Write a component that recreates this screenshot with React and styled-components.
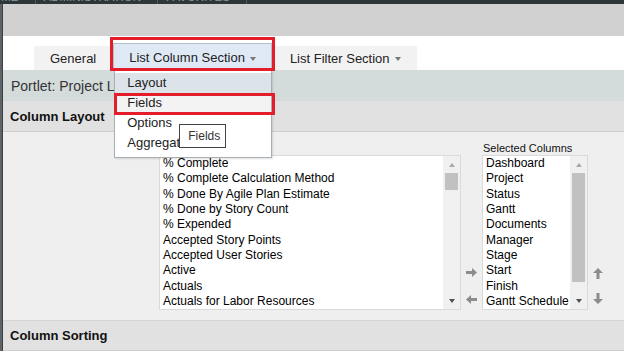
import React from 'react';
import styled, { createGlobalStyle } from 'styled-components';

const GlobalStyle = createGlobalStyle`
  html, body {
    margin: 0;
    padding: 0;
  }
  body {
    background: #5d6366;
    font-family: "Liberation Sans", Arial, sans-serif;
    overflow: hidden;
  }
  * {
    box-sizing: border-box;
  }
`;

const availableFields = [
  '% Complete',
  '% Complete Calculation Method',
  '% Done By Agile Plan Estimate',
  '% Done by Story Count',
  '% Expended',
  'Accepted Story Points',
  'Accepted User Stories',
  'Active',
  'Actuals',
  'Actuals for Labor Resources',
];

const selectedFields = [
  'Dashboard',
  'Project',
  'Status',
  'Gantt',
  'Documents',
  'Manager',
  'Stage',
  'Start',
  'Finish',
  'Gantt Schedule',
];

const Page = styled.div`
  width: 624px;
  height: 351px;
  overflow: hidden;
  background: #5d6366;
`;

const TopNav = styled.div`
  height: 4px;
  overflow: hidden;
  background: #2d3639;
  display: flex;
  margin-left: -24px;
`;

const NavItem = styled.div`
  margin-top: -10px;
  height: 14px;
  line-height: 14px;
  font-size: 11.5px;
  color: #8f9699;
  padding: 0 16px 0 8px;
  border-right: 1px solid #4f585b;
  white-space: nowrap;
`;

const Modal = styled.div`
  margin-left: 2px;
  height: 347px;
  border-left: 1px solid #3b4043;
  background: #efefef;
  display: flex;
  flex-direction: column;
`;

const ModalHeader = styled.div`
  height: 32px;
  background: #d1d1d1;
`;

const TabBar = styled.div`
  height: 34px;
  background: #fff;
  display: flex;
  align-items: flex-end;
  gap: 1px;
  padding-left: 31px;
  position: relative;
  z-index: 2;
`;

const Tab = styled.div`
  height: ${(p) => (p.$active ? '27px' : '24px')};
  padding: ${(p) => (p.$active ? '1px 15px 0 15px' : '0 16px 0 16px')};
  background: ${(p) => (p.$active ? '#dfe9f5' : '#f2f2f2')};
  border: ${(p) => (p.$active ? '1px solid #b5bfc8' : 'none')};
  border-bottom: none;
  display: flex;
  align-items: center;
  gap: 5px;
  font-size: 13px;
  color: #222;
  white-space: nowrap;
`;

const Caret = styled.span`
  width: 0;
  height: 0;
  margin-top: 2px;
  border-left: 3.5px solid transparent;
  border-right: 3.5px solid transparent;
  border-top: 4px solid #777;
`;

const MenuAnchor = styled.div`
  position: relative;
  margin-right: 1px;
`;

const Highlight = styled.span`
  position: absolute;
  top: ${(p) => p.$t}px;
  right: ${(p) => p.$r}px;
  bottom: ${(p) => p.$b}px;
  left: ${(p) => p.$l}px;
  border: 3px solid #e31e2a;
  pointer-events: none;
  z-index: 3;
`;

const Menu = styled.div`
  position: absolute;
  top: 100%;
  left: 1px;
  width: 158px;
  padding: 2px 0 4px;
  background: #fff;
  border: 1px solid #a7aeb4;
  box-shadow: 1px 1px 2px rgba(0, 0, 0, 0.12);
`;

const MenuItem = styled.div`
  position: relative;
  height: 20px;
  line-height: 20px;
  padding-left: 12px;
  font-size: 13px;
  color: #222;
  background: ${(p) =>
    p.$tone === 'current' ? '#dce4ea' : p.$tone === 'hover' ? '#f3f3f3' : '#fff'};
`;

const Tooltip = styled.div`
  position: absolute;
  left: 64px;
  top: 53px;
  width: 47px;
  height: 24px;
  padding-left: 8px;
  line-height: 22px;
  font-size: 12px;
  color: #333;
  background: #fff;
  border: 1px solid #444;
`;

const PortletBar = styled.div`
  height: 31px;
  padding-left: 8px;
  display: flex;
  align-items: center;
  background: #d3dbdb;
  font-size: 14px;
  color: #333;
`;

const SectionBar = styled.div`
  height: 31px;
  padding-left: 7px;
  display: flex;
  align-items: center;
  background: #e1e1e1;
  border-top: ${(p) => (p.$topLine ? '1px solid #d4d4d4' : 'none')};
  border-bottom: 1px solid #cfcfcf;
  font-size: 13px;
  font-weight: bold;
  color: #111;
`;

const LayoutBody = styled.div`
  height: 188px;
  display: flex;
  align-items: flex-end;
  padding: 0 0 10px 156px;
  background: #efefef;
`;

const ListBox = styled.div`
  width: ${(p) => p.$w}px;
  height: 155px;
  display: flex;
  background: #fff;
  border: 1px solid #dadada;
`;

const Options = styled.div`
  flex: 1;
  overflow: hidden;
  padding-left: ${(p) => p.$pad}px;
  font-size: 12px;
  line-height: 15.33px;
  color: #000;
  white-space: nowrap;
`;

const ScrollBar = styled.div`
  width: 17px;
  display: flex;
  flex-direction: column;
  background: #f0f0f0;
`;

const ScrollBtn = styled.div`
  height: 17px;
  display: flex;
  align-items: center;
  justify-content: center;
  &::before {
    content: '';
    width: 0;
    height: 0;
    border-left: 3.5px solid transparent;
    border-right: 3.5px solid transparent;
    ${(p) =>
      p.$down
        ? 'border-top: 4px solid #505050;'
        : 'border-bottom: 4px solid #a8a8a8;'}
  }
`;

const Track = styled.div`
  flex: 1;
`;

const Thumb = styled.div`
  height: ${(p) => p.$h}px;
  margin: 0 2px;
  background: #c1c1c1;
`;

const ArrowCol = styled.div`
  width: ${(p) => p.$w}px;
  height: 155px;
  display: flex;
  flex-direction: column;
  align-items: ${(p) => (p.$start ? 'flex-start' : 'center')};
  justify-content: flex-end;
  gap: ${(p) => p.$gap}px;
  padding: 0 0 6px ${(p) => (p.$start ? 5 : 0)}px;
`;

const SelectedCol = styled.div`
  display: flex;
  flex-direction: column;
`;

const Label = styled.div`
  font-size: 11px;
  line-height: 13px;
  padding-left: 1px;
  color: #111;
`;

const Arrow = ({ dir }) => {
  const paths = {
    right: 'M0 3H6V0L11 4.5L6 9V6H0Z',
    left: 'M11 3H5V0L0 4.5L5 9V6H11Z',
    up: 'M3.5 11V5H0L5 0L10 5H6.5V11Z',
    down: 'M3.5 0V6H0L5 11L10 6H6.5V0Z',
  };
  const horiz = dir === 'right' || dir === 'left';
  return (
    <svg width={horiz ? 11 : 10} height={horiz ? 9 : 11} viewBox={horiz ? '0 0 11 9' : '0 0 10 11'}>
      <path d={paths[dir]} fill="#8c8c8c" />
    </svg>
  );
};

const List = ({ items, width, pad, thumb }) => (
  <ListBox $w={width}>
    <Options $pad={pad}>
      {items.map((item) => (
        <div key={item}>{item}</div>
      ))}
    </Options>
    <ScrollBar>
      <ScrollBtn />
      <Track>
        <Thumb $h={thumb} />
      </Track>
      <ScrollBtn $down />
    </ScrollBar>
  </ListBox>
);

export default function App() {
  return (
    <Page>
      <GlobalStyle />
      <TopNav>
        <NavItem>HOME</NavItem>
        <NavItem>ADMINISTRATION</NavItem>
        <NavItem>FAVORITES</NavItem>
      </TopNav>
      <Modal>
        <ModalHeader />
        <TabBar>
          <Tab>General</Tab>
          <MenuAnchor>
            <Tab $active>
              List Column Section <Caret />
            </Tab>
            <Highlight $t={-6} $r={-3} $b={-1} $l={-3} />
            <Menu>
              <MenuItem $tone="current">Layout</MenuItem>
              <MenuItem $tone="hover">
                Fields
                <Highlight $t={0} $r={-4} $b={-2} $l={-1} />
              </MenuItem>
              <MenuItem>Options</MenuItem>
              <MenuItem>Aggregation</MenuItem>
              <Tooltip>Fields</Tooltip>
            </Menu>
          </MenuAnchor>
          <Tab>
            List Filter Section <Caret />
          </Tab>
        </TabBar>
        <PortletBar>Portlet: Project List</PortletBar>
        <SectionBar>Column Layout</SectionBar>
        <LayoutBody>
          <List items={availableFields} width={302} pad={3} thumb={17} />
          <ArrowCol $w={21} $gap={18}>
            <Arrow dir="right" />
            <Arrow dir="left" />
          </ArrowCol>
          <SelectedCol>
            <Label>Selected Columns</Label>
            <List items={selectedFields} width={106} pad={3} thumb={109} />
          </SelectedCol>
          <ArrowCol $w={20} $gap={14} $start>
            <Arrow dir="up" />
            <Arrow dir="down" />
          </ArrowCol>
        </LayoutBody>
        <SectionBar $topLine>Column Sorting</SectionBar>
      </Modal>
    </Page>
  );
}
